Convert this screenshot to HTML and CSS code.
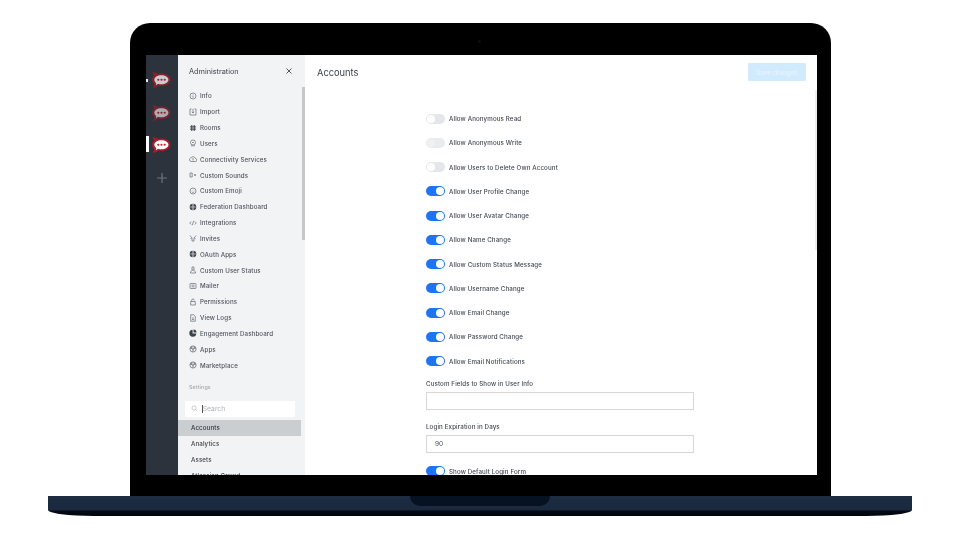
FILE: index.html
```html
<!DOCTYPE html>
<html lang="en">
<head>
<meta charset="utf-8">
<title>Accounts</title>
<link rel="stylesheet" href="styles.css">
</head>
<body>
<svg class="defs" width="0" height="0" aria-hidden="true">
  <symbol id="rc" viewBox="0 0 20 17">
    <path class="rc-red" d="M.3.3c2.600 0 4.800.6 6.200 1.700 1-.3 2.100-.4 3.300-.4 5.400 0 9.900 2.900 9.900 6.600s-4.500 6.700-9.900 6.700c-1 0-2-.1-3-.3C5.300 15.800 3 16.800.6 16.800c1-1.300 1.500-2.800 1.300-4.400C.8 11.300 0 9.800 0 8.200c0-1.500.7-2.900 1.900-4C1.700 2.900 1.200 1.400.3.300z"/>
    <path class="rc-white" d="M2.400 8.200c0-2.600 3.300-4.700 7.400-4.700s7.600 2.100 7.600 4.700-3.500 4.800-7.600 4.800c-1.200 0-2.400-.2-3.400-.6L4 14.200c.4-1 .4-2 0-2.800C3 10.500 2.400 9.400 2.400 8.200z"/>
    <circle class="rc-dot" cx="6.600" cy="8.200" r="1.150"/><circle class="rc-dot" cx="10" cy="8.200" r="1.150"/><circle class="rc-dot" cx="13.400" cy="8.200" r="1.150"/>
  </symbol>
</svg>
<main class="page">
  <div class="lid">
    <div class="camera"></div>
    <div class="screen">
      <nav class="rail">
        <div class="rail-item"><span class="pip"></span><svg class="logo dim"><use href="#rc"/></svg></div>
        <div class="rail-item"><svg class="logo dim2"><use href="#rc"/></svg></div>
        <div class="rail-item"><span class="pip active"></span><svg class="logo"><use href="#rc"/></svg></div>
        <div class="rail-item plus"><svg viewBox="0 0 12 12"><path d="M6 1v10M1 6h10"/></svg></div>
      </nav>
      <aside class="side">
        <header class="side-head"><span>Administration</span><svg class="close" viewBox="0 0 8 8"><path d="M1.500 1.500l5 5M6.500 1.500l-5 5"/></svg></header>
        <ul class="menu">
          <li><svg class="ic" viewBox="0 0 8 8"><circle cx="4" cy="4" r="3"/><path d="M4 3.500v2.200M4 2.200v.5"/></svg>Info</li>
          <li><svg class="ic" viewBox="0 0 8 8"><path d="M2.500 1H1v6h6V1H5.500M4 .8v4M2.800 3.800L4 5l1.200-1.200"/></svg>Import</li>
          <li><svg class="ic heavy" viewBox="0 0 8 8"><path d="M2.800 1v6M5.200 1v6M1 2.900h6M1 5.100h6"/></svg>Rooms</li>
          <li><svg class="ic" viewBox="0 0 8 8"><circle cx="4" cy="3.500" r="2.500"/><path d="M2 6.800h4M3 3.500h2"/></svg>Users</li>
          <li><svg class="ic" viewBox="0 0 8 8"><path d="M2 6.500h4.200a1.500 1.500 0 0 0 .3-3A2.600 2.600 0 0 0 1.800 3 1.800 1.800 0 0 0 2 6.500zM4 3v2.500"/></svg>Connectivity Services</li>
          <li><svg class="ic" viewBox="0 0 8 8"><path d="M1 2h2.200v4H1zM5 4h2M6 3v2"/></svg>Custom Sounds</li>
          <li><svg class="ic" viewBox="0 0 8 8"><circle cx="4" cy="4" r="3"/><path d="M2.700 4.800c.7.800 1.900.8 2.600 0M3 3h.3M4.900 3h.3"/></svg>Custom Emoji</li>
          <li><svg class="ic fill" viewBox="0 0 8 8"><circle cx="4" cy="4" r="3.300"/><path class="cut" d="M.8 4h6.400M4 .8C3 2 3 6 4 7.200M4 .8C5 2 5 6 4 7.200"/></svg>Federation Dashboard</li>
          <li><svg class="ic" viewBox="0 0 8 8"><path d="M2.200 2.500L.7 4l1.500 1.500M5.800 2.500L7.300 4 5.800 5.500M4.700 1.800L3.300 6.200"/></svg>Integrations</li>
          <li><svg class="ic" viewBox="0 0 8 8"><path d="M1 1.500l2 2.500v3M7 1.500L5 4v3M1.500 4.500h1M5.500 4.500h1M3 7h2"/></svg>Invites</li>
          <li><svg class="ic fill" viewBox="0 0 8 8"><circle cx="4" cy="4" r="3.300"/><path class="cut" d="M.8 4h6.400M4 .8C3 2 3 6 4 7.200M4 .8C5 2 5 6 4 7.200"/></svg>OAuth Apps</li>
          <li><svg class="ic" viewBox="0 0 8 8"><path d="M3 1h2v3H3zM3.300 4L1.500 6v1h5V6L4.700 4"/></svg>Custom User Status</li>
          <li><svg class="ic" viewBox="0 0 8 8"><rect x="1" y="1.500" width="6" height="5" rx=".6"/><path d="M2.500 3.200h3M2.500 4.800h3"/></svg>Mailer</li>
          <li><svg class="ic" viewBox="0 0 8 8"><path d="M1.700 3.500h4.600V7H1.700zM2.700 3.500V2.300a1.300 1.300 0 0 1 2.600 0"/></svg>Permissions</li>
          <li><svg class="ic" viewBox="0 0 8 8"><path d="M1.700.8h3l1.600 1.600v4.800H1.700zM3 4h2M3 5.500h2"/></svg>View Logs</li>
          <li><svg class="ic fill solid" viewBox="0 0 8 8"><path d="M3.600.7v3.700h3.700A3.500 3.500 0 1 1 3.600.7zM4.500.5a3 3 0 0 1 3 3h-3z"/></svg>Engagement Dashboard</li>
          <li><svg class="ic" viewBox="0 0 8 8"><circle cx="4" cy="4" r="3.100"/><path d="M1 3.200h6M3 1.200l-.6 2 1.600 2 1.600-2-.6-2M4 5.200V7"/></svg>Apps</li>
          <li><svg class="ic" viewBox="0 0 8 8"><circle cx="4" cy="4" r="3.100"/><path d="M1 3.200h6M3 1.200l-.6 2 1.600 2 1.600-2-.6-2M4 5.200V7"/></svg>Marketplace</li>
        </ul>
        <div class="side-label">Settings</div>
        <div class="search">
          <svg class="ic" viewBox="0 0 8 8"><circle cx="3.500" cy="3.500" r="2.400"/><path d="M5.300 5.300L7 7"/></svg>
          <span class="caret"></span><span>Search</span>
        </div>
        <ul class="settings">
          <li class="selected">Accounts</li>
          <li>Analytics</li>
          <li>Assets</li>
          <li>Atlassian Crowd</li>
        </ul>
        <div class="side-scroll"></div>
      </aside>
      <section class="content">
        <header class="content-head">
          <h1>Accounts</h1>
          <button class="save" type="button">Save changes</button>
        </header>
        <div class="form">
          <div class="toggle-row"><span class="toggle"></span>Allow Anonymous Read</div>
          <div class="toggle-row"><span class="toggle disabled"></span>Allow Anonymous Write</div>
          <div class="toggle-row"><span class="toggle"></span>Allow Users to Delete Own Account</div>
          <div class="toggle-row"><span class="toggle on"></span>Allow User Profile Change</div>
          <div class="toggle-row"><span class="toggle on"></span>Allow User Avatar Change</div>
          <div class="toggle-row"><span class="toggle on"></span>Allow Name Change</div>
          <div class="toggle-row"><span class="toggle on"></span>Allow Custom Status Message</div>
          <div class="toggle-row"><span class="toggle on"></span>Allow Username Change</div>
          <div class="toggle-row"><span class="toggle on"></span>Allow Email Change</div>
          <div class="toggle-row"><span class="toggle on"></span>Allow Password Change</div>
          <div class="toggle-row"><span class="toggle on"></span>Allow Email Notifications</div>
          <div class="field">
            <div class="field-label">Custom Fields to Show in User Info</div>
            <div class="input"></div>
          </div>
          <div class="field">
            <div class="field-label">Login Expiration in Days</div>
            <div class="input">90</div>
          </div>
          <div class="toggle-row"><span class="toggle on"></span>Show Default Login Form</div>
        </div>
        <div class="main-scroll"></div>
      </section>
    </div>
  </div>
  <div class="base"><div class="notch"></div></div>
</main>
</body>
</html>
```
FILE: styles.css
```css
* { box-sizing: border-box; }
html, body { margin: 0; padding: 0; background: #fff; }
body { width: 960px; height: 540px; overflow: hidden; font-family: Inter, "Liberation Sans", sans-serif; }
.defs { position: absolute; }
ul { list-style: none; margin: 0; padding: 0; }

.page { display: flex; flex-direction: column; align-items: center; padding-top: 23px; }
.lid { position: relative; width: 701px; height: 473px; margin-left: 1px; padding: 32px 14px 21px 16px; background: #000; border-radius: 20px 20px 0 0; }
.camera { position: absolute; left: 348px; top: 17px; width: 3px; height: 3px; border-radius: 50%; background: #0c0e12; }
.screen { display: flex; height: 420px; background: #fff; overflow: hidden; filter: blur(.45px); }
.base { position: relative; width: 864px; height: 20px; background: linear-gradient(180deg, #1e2c42 0, #1b293e 68%, #040a14 76%, #01040a 100%); border-radius: 0 0 46px 46px / 0 0 6px 6px; }
.notch { width: 140px; height: 10px; margin: 0 auto; background: #061122; border-radius: 0 0 10px 10px; }

.rail { flex: 0 0 32px; display: flex; flex-direction: column; padding-top: 17px; background: #2d333c; }
.rail-item { position: relative; height: 32.500px; display: flex; align-items: flex-start; padding: 0 0 0 6px; }
.logo { width: 19px; height: 16px; }
.rc-red { fill: #a81c28; }
.rc-white { fill: #fff; }
.rc-dot { fill: #c8162c; }
.logo.dim { opacity: .75; }
.logo.dim2 { opacity: .6; }
.pip { position: absolute; left: 0; top: 7px; width: 2px; height: 3px; background: #e9eaec; }
.pip.active { top: -1px; width: 2.500px; height: 16px; background: #fff; }
.plus { padding: 2px 0 0 10px; }
.plus svg { width: 12px; height: 12px; fill: none; stroke: #6f747c; stroke-width: 1.200; }

.side { position: relative; flex: 0 0 127px; background: #f2f3f5; overflow: hidden; display: flex; flex-direction: column; }
.side-head { height: 32px; flex: none; display: flex; justify-content: space-between; align-items: center; padding: 0 12px 0 11px; font-size: 7.300px; color: #3f444d; }
.close { width: 8px; height: 8px; fill: none; stroke: #3f444d; stroke-width: .9; }
.menu { flex: none; padding-top: .9px; }
.menu li { display: flex; align-items: center; height: 15.850px; padding-left: 11px; font-size: 6.200px; font-weight: 500; letter-spacing: .1px; color: #4f555d; white-space: nowrap; }
.ic { flex: none; width: 8px; height: 8px; margin-right: 3px; fill: none; stroke: #5a6068; stroke-width: .65; }
.ic.heavy { stroke-width: 1; stroke: #3a3f48; }
.ic.fill { fill: #3d424b; stroke: none; }
.ic .cut { fill: none; stroke: #f2f3f5; stroke-width: .5; }
.side-label { flex: none; margin: 8.700px 0 0 11px; height: 10px; line-height: 10px; font-size: 5.300px; font-weight: 500; letter-spacing: .15px; color: #a5a9ae; }
.search { flex: none; display: flex; align-items: center; width: 110px; height: 16px; margin: 9px 0 0 7px; padding-left: 6px; background: #fff; font-size: 6.800px; color: #b0b3b8; }
.search .ic { stroke: #a6a9ae; margin-right: 4px; width: 7px; height: 7px; }
.caret { width: .7px; height: 8px; background: #555; }
.settings { flex: none; margin: 3px 4px 0 0; }
.settings li { height: 16px; line-height: 16px; padding-left: 13px; font-size: 6.200px; font-weight: 500; letter-spacing: .1px; color: #3f444d; white-space: nowrap; }
.settings .selected { background: #cbced1; color: #2f343d; }
.side-scroll { position: absolute; right: 0; top: 32px; width: 3.500px; height: 153px; background: #c6c8cb; }

.content { position: relative; flex: 1; min-width: 0; overflow: hidden; }
.content-head { height: 35px; display: flex; justify-content: space-between; align-items: center; padding: 0 11px 0 12px; }
.content-head h1 { margin: 0; font-size: 9.300px; font-weight: 400; color: #3a3f48; }
.save { width: 58px; height: 18px; margin: -1px 0 0; padding: 0; border: 0; border-radius: 1px; background: #d1ebfe; color: #eaf5ff; font: 6.200px Inter, sans-serif; }
.form { width: 268px; margin-left: 121px; padding-top: 16.400px; }
.toggle-row { display: flex; align-items: center; height: 24.250px; font-size: 6.200px; font-weight: 500; letter-spacing: .12px; color: #444952; white-space: nowrap; }
.toggle { position: relative; flex: none; width: 19px; height: 10px; margin-right: 4px; border-radius: 5px; background: #e4e6e9; }
.toggle::after { content: ""; position: absolute; left: 1px; top: 1px; width: 8px; height: 8px; border-radius: 50%; background: #fff; }
.toggle.disabled { background: #e9ebed; }
.toggle.disabled::after { background: #eef0f1; }
.toggle.on { background: #1d74f5; }
.toggle.on::after { left: 10px; }
.field { height: 43px; }
.field-label { height: 18.500px; padding-top: 6px; line-height: 9px; font-size: 6.200px; font-weight: 500; letter-spacing: .12px; color: #444952; }
.input { height: 18.500px; padding-left: 8px; border: 1px solid #d6d8da; background: #fff; line-height: 16.500px; font-size: 6.500px; color: #444952; }
.main-scroll { position: absolute; right: 0; top: 35px; width: 2px; height: 160px; background: #eeeff1; }
```
